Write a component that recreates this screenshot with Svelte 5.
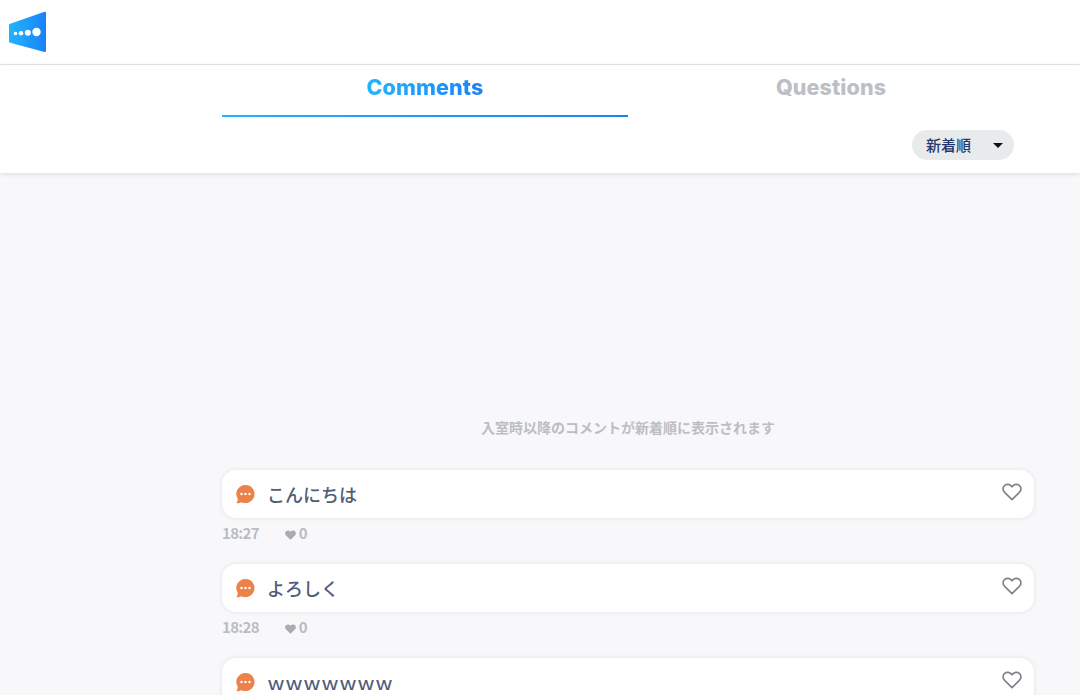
<script>
  const comments = [
    { text: "こんにちは", time: "18:27", likes: 0 },
    { text: "よろしく", time: "18:28", likes: 0 },
    { text: "ｗｗｗｗｗｗｗ" },
  ];
</script>

<div class="page">
  <header>
    <svg class="logo" width="38" height="42" viewBox="0 0 38 42">
      <defs>
        <linearGradient id="logoGrad" x1="0" y1="0" x2="1" y2="0">
          <stop offset="0" stop-color="#22b4ff" />
          <stop offset="1" stop-color="#1a82f7" />
        </linearGradient>
      </defs>
      <path d="M1.2 12.8 L35.6 0.8 Q37 0.4 37 1.8 V39.8 Q37 41.4 35.5 41 L1.2 31.8 Q0 31.4 0 30.4 V14.2 Q0 13.2 1.2 12.8 Z" fill="url(#logoGrad)" />
      <circle cx="6.5" cy="22.5" r="1.8" fill="#fff" />
      <circle cx="12" cy="22.3" r="2.3" fill="#fff" />
      <circle cx="18.8" cy="21.8" r="3" fill="#fff" />
      <circle cx="27.5" cy="21" r="4.2" fill="#fff" />
    </svg>
  </header>

  <div class="top">
    <nav class="tabs">
      <div class="tab active"><span>Comments</span></div>
      <div class="tab"><span>Questions</span></div>
    </nav>
    <div class="sort">
      <div class="select">
        <span>新着順</span>
        <i class="caret"></i>
      </div>
    </div>
  </div>

  <main>
    <p class="hint">入室時以降のコメントが新着順に表示されます</p>
    {#each comments as c}
      <div class="item">
        <div class="card">
          <svg class="bubble" width="19" height="20" viewBox="0 0 20 20">
            <path d="M10 0.4 A9.6 9.6 0 1 1 5.6 18.6 Q3 19.9 0.8 19.7 Q0.3 19.6 0.6 19.1 Q1.8 17.6 1.9 15.2 A9.6 9.6 0 0 1 10 0.4 Z" fill="#ec8149" />
            <circle cx="5.8" cy="10" r="1.3" fill="#fff" />
            <circle cx="10" cy="10" r="1.3" fill="#fff" />
            <circle cx="14.2" cy="10" r="1.3" fill="#fff" />
          </svg>
          <span class="text">{c.text}</span>
          <svg class="heart" width="20" height="18" viewBox="0 0 20 18">
            <path d="M10 16.6 L2.6 9.4 C0.4 7.2 0.6 4 2.7 2.3 C4.9 0.6 8 1 10 3.8 C12 1 15.1 0.6 17.3 2.3 C19.4 4 19.6 7.2 17.4 9.4 Z" fill="none" stroke="#808489" stroke-width="1.7" stroke-linejoin="round" />
          </svg>
        </div>
        {#if c.time}
          <div class="meta">
            <span class="time">{c.time}</span>
            <span class="likes">
              <svg width="11" height="10" viewBox="0 0 20 18">
                <path d="M10 17.6 L2 9.8 C-0.6 7.2 -0.2 3.4 2.2 1.6 C4.8 -0.2 8 0.6 10 3.2 C12 0.6 15.2 -0.2 17.8 1.6 C20.2 3.4 20.6 7.2 18 9.8 Z" fill="#a9adb3" />
              </svg>
              {c.likes}
            </span>
          </div>
        {/if}
      </div>
    {/each}
  </main>
</div>

<style>
  :global(body) {
    margin: 0;
    overflow: hidden;
  }
  .page {
    height: 695px;
    overflow: hidden;
    background: #f8f8fa;
    font-family: "Noto Sans CJK JP", "Noto Sans", sans-serif;
  }
  header {
    height: 64px;
    background: #fff;
    border-bottom: 1px solid #e6e7e8;
    padding-left: 9px;
    display: flex;
    align-items: flex-start;
  }
  .logo {
    margin-top: 10.5px;
  }
  .top {
    height: 108px;
    background: #fff;
    box-shadow: 0 1px 5px rgba(0, 0, 0, 0.12);
    padding-left: 222px;
  }
  .tabs {
    display: flex;
    width: 812px;
    height: 52px;
  }
  .tab {
    flex: 1;
    text-align: center;
    box-sizing: border-box;
    padding-top: 8px;
    font-family: Inter, "Noto Sans", sans-serif;
    font-weight: 800;
    font-size: 21.5px;
    line-height: 29px;
    letter-spacing: 0.1px;
    color: #bcc0c4;
  }
  .tab.active {
    border-bottom: 2px solid;
    border-image: linear-gradient(90deg, #22b4ff, #1a82f7) 1;
  }
  .tab.active span {
    background: linear-gradient(90deg, #22b4ff, #1a82f7);
    -webkit-background-clip: text;
    background-clip: text;
    color: transparent;
  }
  .sort {
    width: 792px;
    display: flex;
    justify-content: flex-end;
    padding-top: 13px;
  }
  .select {
    width: 102px;
    height: 30px;
    border-radius: 15px;
    background: #e9eaec;
    box-sizing: border-box;
    padding: 0 11px 2px 14px;
    display: flex;
    align-items: center;
    justify-content: space-between;
    font-size: 15px;
    font-weight: 500;
    color: #23386f;
  }
  .caret {
    margin-top: 2px;
    border-left: 5px solid transparent;
    border-right: 5px solid transparent;
    border-top: 5px solid #111;
  }
  main {
    padding: 243px 0 0 222px;
    width: 812px;
  }
  .hint {
    margin: 0 0 32px;
    text-align: center;
    font-size: 14px;
    line-height: 22px;
    font-weight: 700;
    color: #bcbec2;
  }
  .item {
    height: 94px;
  }
  .card {
    height: 48px;
    background: #fff;
    border-radius: 14px;
    box-shadow: 0 0 4px rgba(0, 0, 0, 0.1);
    padding: 0 12px 0 14px;
    display: flex;
    align-items: center;
  }
  .bubble {
    margin-right: 12px;
  }
  .text {
    flex: 1;
    font-size: 18px;
    font-weight: 500;
    color: #4f5d78;
  }
  .heart {
    margin-top: -4px;
  }
  .meta {
    display: flex;
    gap: 25px;
    margin-top: 4px;
    font-size: 15px;
    line-height: 22px;
    font-weight: 700;
    color: #b9bdc3;
  }
  .time {
    letter-spacing: -0.7px;
  }
  .likes {
    letter-spacing: -0.4px;
    margin-left: 1px;
  }
  .likes svg {
    vertical-align: -1px;
  }
</style>
